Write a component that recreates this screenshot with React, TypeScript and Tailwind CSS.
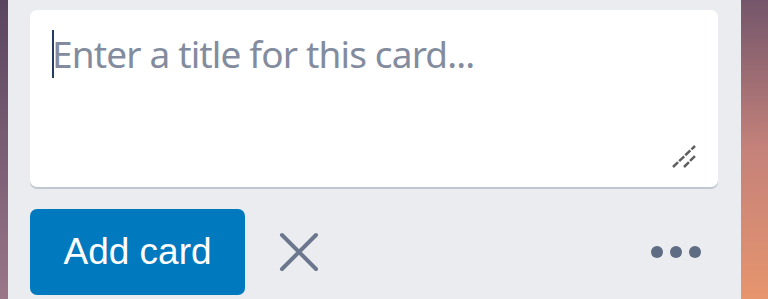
import React from "react";

const CloseIcon: React.FC = () => (
  <svg width="40" height="40" viewBox="0 0 40 40" fill="none">
    <path d="M3 3 L37 37 M37 3 L3 37" stroke="#6b778c" strokeWidth="4" strokeLinecap="round" />
  </svg>
);

const ResizeHandle: React.FC = () => (
  <svg width="26" height="24" viewBox="0 0 26 24" fill="none">
    <path d="M2 22 L24 1 M13 22 L24 11" stroke="#5f5f5f" strokeWidth="2.5" strokeDasharray="7 1.5" />
  </svg>
);

const Dots: React.FC = () => (
  <div className="flex items-center gap-[7px]">
    <span className="w-[12px] h-[12px] rounded-full bg-[#5e6c84]" />
    <span className="w-[12px] h-[12px] rounded-full bg-[#5e6c84]" />
    <span className="w-[12px] h-[12px] rounded-full bg-[#5e6c84]" />
  </div>
);

const App: React.FC = () => {
  return (
    <div className="flex w-[768px] h-[299px] overflow-hidden">
      <div className="w-[8px] bg-gradient-to-b from-[#5a4560] to-[#9a7688]" />
      <div className="flex-1 bg-[#ebecf0] pl-[22px] pr-[23px] pt-[10px]">
        <div className="relative h-[177px] bg-white rounded-[7px] shadow-[0_2px_0_#c1c7d0] pl-[22px] pt-[20px]">
          <div className="flex items-center">
            <span className="w-[2px] h-[48px] bg-[#243b63] -mr-[2px]" />
            <span className="font-['Noto_Sans',sans-serif] text-[37px] leading-[48px] text-[#838c9e] tracking-[-0.85px]">
              Enter a title for this card...
            </span>
          </div>
          <div className="absolute right-[21px] bottom-[18px]">
            <ResizeHandle />
          </div>
        </div>
        <div className="flex items-center mt-[22px]">
          <button className="w-[215px] h-[86px] bg-[#0079bf] rounded-[7px] text-white font-['Liberation_Sans',sans-serif] text-[37px]">
            Add card
          </button>
          <div className="ml-[34px]">
            <CloseIcon />
          </div>
          <div className="ml-auto mr-[17px]">
            <Dots />
          </div>
        </div>
      </div>
      <div className="w-[27px] bg-gradient-to-b from-[#74566a] via-[#c5827a] to-[#e6956c]" />
    </div>
  );
};

export default App;
